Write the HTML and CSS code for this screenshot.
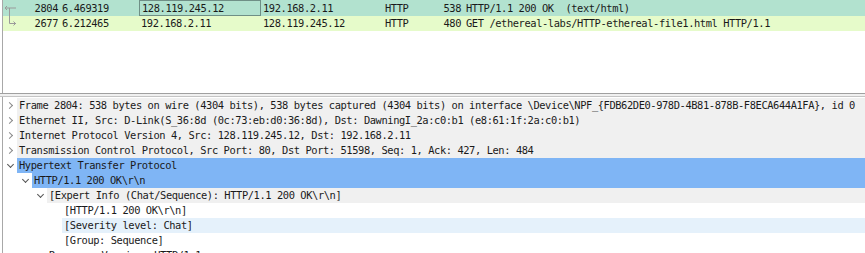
FILE: index.html
```html
<!DOCTYPE html>
<html lang="en">
<head>
    <meta charset="UTF-8">
    <title>Packet Details</title>
    <link rel="stylesheet" href="styles.css">
</head>
<body>
    <div class="packet-list">
        <div class="pkt-row resp">
            <span class="mark">
                <svg width="25" height="16" viewBox="0 0 25 16">
                    <path d="M2 8 H13" stroke="#9a9a9a" stroke-width="1" fill="none"/>
                    <path d="M6.5 8 V16" stroke="#9a9a9a" stroke-width="1" fill="none"/>
                    <path d="M4 6 L2 8 L4 10" stroke="#9a9a9a" stroke-width="1" fill="none"/>
                </svg>
            </span>
            <span class="c-no">2804</span>
            <span class="c-time">6.469319</span>
            <span class="c-src focus">128.119.245.12</span>
            <span class="c-dst">192.168.2.11</span>
            <span class="c-proto">HTTP</span>
            <span class="c-len">538</span>
            <span class="c-info">HTTP/1.1 200 OK  (text/html)</span>
        </div>
        <div class="pkt-row req">
            <span class="mark">
                <svg width="25" height="15" viewBox="0 0 25 15">
                    <path d="M6.5 0 V7.5 H13" stroke="#9a9a9a" stroke-width="1" fill="none"/>
                    <path d="M10.5 5.5 L12.5 7.5 L10.5 9.5" stroke="#9a9a9a" stroke-width="1" fill="none"/>
                </svg>
            </span>
            <span class="c-no">2677</span>
            <span class="c-time">6.212465</span>
            <span class="c-src">192.168.2.11</span>
            <span class="c-dst">128.119.245.12</span>
            <span class="c-proto">HTTP</span>
            <span class="c-len">480</span>
            <span class="c-info">GET /ethereal-labs/HTTP-ethereal-file1.html HTTP/1.1</span>
        </div>
    </div>

    <div class="splitter"></div>

    <div class="details">
        <div class="node lvl0 shade">
            <span class="twisty closed"></span>
            <span class="label">Frame 2804: 538 bytes on wire (4304 bits), 538 bytes captured (4304 bits) on interface \Device\NPF_{FDB62DE0-978D-4B81-878B-F8ECA644A1FA}, id 0</span>
        </div>
        <div class="node lvl0 shade">
            <span class="twisty closed"></span>
            <span class="label">Ethernet II, Src: D-Link(S_36:8d (0c:73:eb:d0:36:8d), Dst: DawningI_2a:c0:b1 (e8:61:1f:2a:c0:b1)</span>
        </div>
        <div class="node lvl0 shade">
            <span class="twisty closed"></span>
            <span class="label">Internet Protocol Version 4, Src: 128.119.245.12, Dst: 192.168.2.11</span>
        </div>
        <div class="node lvl0 shade">
            <span class="twisty closed"></span>
            <span class="label">Transmission Control Protocol, Src Port: 80, Dst Port: 51598, Seq: 1, Ack: 427, Len: 484</span>
        </div>
        <div class="node lvl0 selected">
            <span class="twisty open"></span>
            <span class="label">Hypertext Transfer Protocol</span>
        </div>
        <div class="node lvl1 selected">
            <span class="twisty open"></span>
            <span class="label">HTTP/1.1 200 OK\r\n</span>
        </div>
        <div class="node lvl2 shade">
            <span class="twisty open"></span>
            <span class="label">[Expert Info (Chat/Sequence): HTTP/1.1 200 OK\r\n]</span>
        </div>
        <div class="node lvl3">
            <span class="twisty"></span>
            <span class="label">[HTTP/1.1 200 OK\r\n]</span>
        </div>
        <div class="node lvl3 hover">
            <span class="twisty"></span>
            <span class="label">[Severity level: Chat]</span>
        </div>
        <div class="node lvl3">
            <span class="twisty"></span>
            <span class="label">[Group: Sequence]</span>
        </div>
        <div class="node lvl2">
            <span class="twisty"></span>
            <span class="label">Response Version: HTTP/1.1</span>
        </div>
    </div>
</body>
</html>
```

FILE: styles.css
```css
* {
    margin: 0;
    padding: 0;
    box-sizing: border-box;
}

body {
    width: 865px;
    height: 253px;
    overflow: hidden;
    background: #fff;
    font-family: "DejaVu Sans Mono", "Liberation Mono", monospace;
    font-size: 10.4px;
    letter-spacing: -0.41px;
    color: #1a1a1a;
}

/* packet list pane */
.packet-list {
    height: 93px;
    margin-left: 2px;
    border-left: 1px solid #a8a8a8;
}

.pkt-row {
    display: flex;
    height: 15px;
    line-height: 15px;
    white-space: pre;
}

.pkt-row.resp {
    background: #b2e2cf;
    height: 16px;
    line-height: 16px;
}

.pkt-row.req {
    background: #e6fbca;
}

.mark {
    width: 25px;
    display: flex;
}

.c-no {
    width: 30px;
    text-align: right;
}

.c-time {
    width: 81px;
    padding-left: 4px;
}

.c-src {
    width: 122px;
    padding-left: 2px;
}

.c-src.focus {
    border: 1px solid #6f8f86;
    line-height: 14px;
}

.c-dst {
    width: 122px;
    padding-left: 2px;
}

.c-proto {
    width: 55px;
    padding-left: 2px;
}

.c-len {
    width: 25px;
    text-align: right;
    padding-right: 2px;
}

.c-info {
    padding-left: 3px;
}

.splitter {
    height: 4px;
    border-top: 1px solid #a0a0a0;
    border-bottom: 1px solid #c4c4c4;
    background: #f0f0f0;
}

/* packet details pane */
.details {
    margin-left: 2px;
    border-left: 1px solid #a8a8a8;
    padding-top: 1px;
}

.node {
    display: flex;
    height: 15px;
    line-height: 15px;
    white-space: nowrap;
}

.twisty {
    width: 14px;
    display: flex;
    align-items: center;
    justify-content: center;
}

.twisty.closed::before {
    content: "";
    width: 4px;
    height: 4px;
    border-right: 1px solid #8a8a8a;
    border-bottom: 1px solid #8a8a8a;
    transform: rotate(-45deg);
    margin-left: -2px;
}

.twisty.open::before {
    content: "";
    width: 4px;
    height: 4px;
    border-right: 1px solid #555;
    border-bottom: 1px solid #555;
    transform: rotate(45deg);
    margin-top: -3px;
}

.label {
    flex: 1;
    padding-left: 2px;
}

.lvl0 { padding-left: 0; }
.lvl1 { padding-left: 15px; }
.lvl2 { padding-left: 30px; }
.lvl3 { padding-left: 45px; }

.shade .label {
    background: #f0f0f0;
}

.selected .label {
    background: #7fb5f5;
}

.hover .label {
    background: #e5f1fb;
}
```
